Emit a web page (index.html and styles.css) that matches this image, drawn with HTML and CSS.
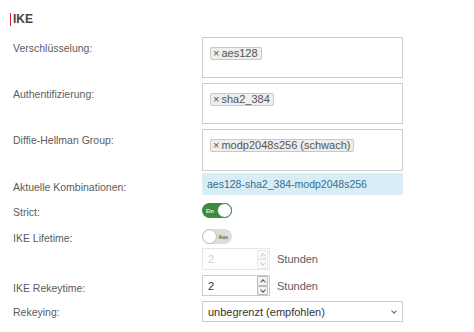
FILE: index.html
```html
<!DOCTYPE html>
<html lang="de">
<head>
    <meta charset="UTF-8">
    <title>IKE</title>
    <link rel="stylesheet" href="styles.css">
</head>
<body>

<div class="panel">
    <h2 class="panel-title">IKE</h2>

    <div class="form-row row-multi">
        <label class="form-label">Verschlüsselung:</label>
        <div class="form-control multiselect">
            <span class="tag"><span class="tag-x">×</span>aes128</span>
        </div>
    </div>

    <div class="form-row row-multi">
        <label class="form-label">Authentifizierung:</label>
        <div class="form-control multiselect">
            <span class="tag"><span class="tag-x">×</span>sha2_384</span>
        </div>
    </div>

    <div class="form-row row-multi row-multi-last">
        <label class="form-label">Diffie-Hellman Group:</label>
        <div class="form-control multiselect">
            <span class="tag"><span class="tag-x">×</span>modp2048s256 (schwach)</span>
        </div>
    </div>

    <div class="form-row row-combo">
        <label class="form-label">Aktuelle Kombinationen:</label>
        <div class="form-control combo">aes128-sha2_384-modp2048s256</div>
    </div>

    <div class="form-row row-toggle">
        <label class="form-label">Strict:</label>
        <div class="form-control">
            <span class="toggle on"><span class="toggle-text">Ein</span><span class="knob"></span></span>
        </div>
    </div>

    <div class="form-row row-toggle">
        <label class="form-label">IKE Lifetime:</label>
        <div class="form-control">
            <span class="toggle off"><span class="knob"></span><span class="toggle-text">Aus</span></span>
        </div>
    </div>

    <div class="form-row row-number row-disabled">
        <label class="form-label"></label>
        <div class="form-control inline">
            <div class="number disabled">
                <span class="number-value">2</span>
                <span class="spinner">
                    <span class="spin up"></span>
                    <span class="spin down"></span>
                </span>
            </div>
            <span class="unit">Stunden</span>
        </div>
    </div>

    <div class="form-row row-number">
        <label class="form-label">IKE Rekeytime:</label>
        <div class="form-control inline">
            <div class="number">
                <span class="number-value">2</span>
                <span class="spinner">
                    <span class="spin up"></span>
                    <span class="spin down"></span>
                </span>
            </div>
            <span class="unit">Stunden</span>
        </div>
    </div>

    <div class="form-row row-select">
        <label class="form-label">Rekeying:</label>
        <div class="form-control select">
            <span>unbegrenzt (empfohlen)</span>
            <span class="chevron"></span>
        </div>
    </div>
</div>

</body>
</html>
```

FILE: styles.css
```css
body {
    margin: 0;
    background-color: #fff;
    font-family: "Liberation Sans", Arial, sans-serif;
    font-size: 10.5px;
    color: #5c5c5c;
}
.panel {
    padding: 13px 0 0 13px;
}
.panel-title {
    margin: 0 0 11px -3px;
    padding-left: 2px;
    border-left: 1.5px solid #e2232e;
    font-size: 12px;
    line-height: 13px;
    font-weight: bold;
    color: #444;
}
.form-row {
    display: flex;
    align-items: flex-start;
}
.form-label {
    width: 189px;
    line-height: 12px;
}
.form-control {
    width: 201px;
    box-sizing: border-box;
}
.row-multi {
    margin-bottom: 5px;
}
.row-multi .form-label {
    padding-top: 5px;
}
.row-multi-last {
    margin-bottom: 2px;
}
.multiselect {
    height: 41px;
    border: 1px solid #ccc;
    padding: 9px 0 0 7px;
}
.row-multi-last .multiselect {
    height: 42px;
}
.tag {
    display: inline-flex;
    align-items: center;
    height: 13px;
    box-sizing: border-box;
    padding: 0 3px 0 2px;
    border: 1px solid #c8c8c8;
    border-radius: 2px;
    background-color: #eee;
    color: #555;
    font-size: 11px;
    line-height: 11px;
}
.tag-x {
    margin-right: 2px;
    color: #555;
    font-size: 11px;
}
.row-combo {
    margin-bottom: 8px;
}
.row-combo .form-label {
    padding-top: 8px;
}
.combo {
    height: 22px;
    line-height: 22px;
    padding-left: 5px;
    background-color: #d9edf7;
    color: #31708f;
}
.row-toggle {
    margin-bottom: 11px;
}
.row-toggle .form-label {
    padding-top: 3px;
}
.toggle {
    display: flex;
    align-items: center;
    width: 30px;
    height: 15px;
    box-sizing: border-box;
    border-radius: 8px;
    font-size: 5px;
    font-weight: bold;
}
.toggle.on {
    background-color: #3b8c3f;
    color: #e8f5e8;
    padding-left: 4px;
    justify-content: space-between;
}
.toggle.off {
    background-color: #ddd;
    color: #555;
    justify-content: space-between;
    padding-right: 4px;
}
.knob {
    width: 15px;
    height: 15px;
    box-sizing: border-box;
    border-radius: 50%;
    background-color: #fff;
}
.toggle.on .knob {
    border: 1.5px solid #3b8c3f;
}
.toggle.off .knob {
    border: 1px solid #bbb;
}
.row-number {
    margin-bottom: 5px;
}
.row-disabled {
    margin-top: -7px;
}
.row-number .form-label {
    padding-top: 7px;
}
.inline {
    display: flex;
    align-items: center;
}
.number {
    display: flex;
    justify-content: space-between;
    align-items: center;
    width: 68px;
    height: 21px;
    box-sizing: border-box;
    border: 1px solid #ccc;
    padding-left: 5px;
    color: #333;
    font-size: 11px;
}
.number.disabled {
    height: 22px;
    border-color: #e6e6e6;
    color: #d0d0d0;
}
.spinner {
    display: flex;
    flex-direction: column;
    height: 19px;
    width: 11px;
    margin-right: 1px;
}
.spin {
    flex: 1;
    position: relative;
    border: 1px solid #bbb;
    border-radius: 1px;
    background-color: #f4f4f4;
}
.spin::after {
    content: "";
    position: absolute;
    left: 3px;
    width: 3px;
    height: 3px;
    border-left: 1px solid #555;
    border-top: 1px solid #555;
}
.spin.up::after {
    top: 3px;
    transform: rotate(45deg);
}
.spin.down::after {
    top: 1px;
    transform: rotate(225deg);
}
.number.disabled .spin {
    border-color: #e8e8e8;
    background-color: #fafafa;
}
.number.disabled .spin::after {
    border-color: #ccc;
}
.unit {
    margin-left: 7px;
    font-size: 11px;
}
.row-select .form-label {
    padding-top: 5px;
}
.row-number + .row-select {
    margin-top: 1px;
}
.select {
    display: flex;
    justify-content: space-between;
    align-items: center;
    height: 21px;
    border: 1px solid #ccc;
    padding: 0 6px 0 5px;
    color: #333;
    font-size: 11px;
}
.chevron {
    width: 3px;
    height: 3px;
    margin-bottom: 2px;
    border-right: 1px solid #666;
    border-bottom: 1px solid #666;
    transform: rotate(45deg);
}
```
